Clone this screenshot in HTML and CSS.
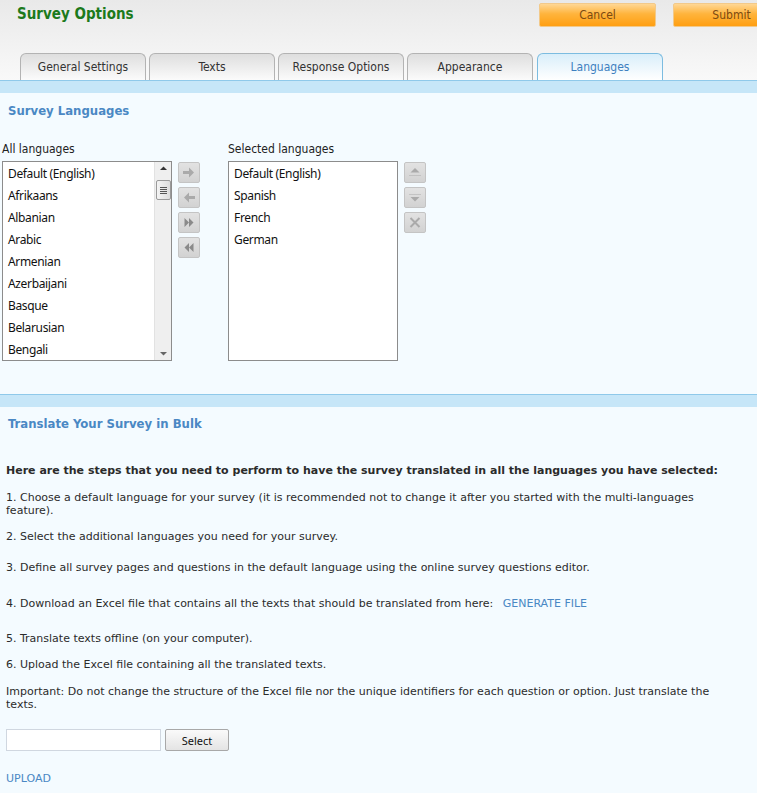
FILE: index.html
```html
<!DOCTYPE html>
<html>
<head>
<meta charset="utf-8">
<link rel="stylesheet" href="styles.css">
</head>
<body>
<div class="page">
  <div class="header">
    <div class="topbar">
      <h1 class="title">Survey Options</h1>
      <div class="actions">
        <button class="obtn">Cancel</button>
        <button class="obtn">Submit</button>
      </div>
    </div>
    <div class="tabs">
      <div class="tab">General Settings</div>
      <div class="tab">Texts</div>
      <div class="tab">Response Options</div>
      <div class="tab">Appearance</div>
      <div class="tab active">Languages</div>
    </div>
  </div>
  <div class="bar"></div>
  <div class="section s1">
    <h2 class="heading">Survey Languages</h2>
    <div class="lists">
      <div class="col">
        <div class="label">All languages</div>
        <div class="listbox">
          <ul class="items">
            <li>Default (English)</li>
            <li>Afrikaans</li>
            <li>Albanian</li>
            <li>Arabic</li>
            <li>Armenian</li>
            <li>Azerbaijani</li>
            <li>Basque</li>
            <li>Belarusian</li>
            <li>Bengali</li>
          </ul>
          <div class="scroll">
            <svg class="sarrow" width="17" height="12" viewBox="0 0 17 12"><path d="M5 8 L8.5 4.5 L12 8 Z" fill="#333"/></svg>
            <div class="thumb">
              <svg width="9" height="8" viewBox="0 0 9 8"><path d="M1 1.5H8M1 3.5H8M1 5.5H8M1 7.5H8" stroke="#555" stroke-width="1"/></svg>
            </div>
            <div class="sfill"></div>
            <svg class="sarrow" width="17" height="12" viewBox="0 0 17 12"><path d="M5 4 L12 4 L8.5 7.5 Z" fill="#666"/></svg>
          </div>
        </div>
      </div>
      <div class="btncol">
        <div class="ibtn"><svg width="20" height="19" viewBox="0 0 20 19"><path d="M4 8H10V4.5L15 9.5L10 14.5V11H4Z" fill="#aaa"/></svg></div>
        <div class="ibtn"><svg width="20" height="19" viewBox="0 0 20 19"><path d="M16 8H10V4.5L5 9.5L10 14.5V11H16Z" fill="#aaa"/></svg></div>
        <div class="ibtn"><svg width="20" height="19" viewBox="0 0 20 19"><path d="M5.5 5L10 9.5L5.5 14Z M10 5L14.5 9.5L10 14Z" fill="#8a8a8a"/></svg></div>
        <div class="ibtn"><svg width="20" height="19" viewBox="0 0 20 19"><path d="M14.5 5L10 9.5L14.5 14Z M10 5L5.5 9.5L10 14Z" fill="#8a8a8a"/></svg></div>
      </div>
      <div class="col col2">
        <div class="label">Selected languages</div>
        <div class="listbox">
          <ul class="items">
            <li>Default (English)</li>
            <li>Spanish</li>
            <li>French</li>
            <li>German</li>
          </ul>
        </div>
      </div>
      <div class="btncol">
        <div class="ibtn"><svg width="20" height="19" viewBox="0 0 20 19"><path d="M5.5 9.5L10 5L14.5 9.5Z" fill="#aaa"/><path d="M4.5 12.5H15.5" stroke="#aaa" stroke-width="1" stroke-dasharray="1 1"/></svg></div>
        <div class="ibtn"><svg width="20" height="19" viewBox="0 0 20 19"><path d="M5.5 9L10 13.5L14.5 9Z" fill="#aaa"/><path d="M4.5 6.5H15.5" stroke="#aaa" stroke-width="1" stroke-dasharray="1 1"/></svg></div>
        <div class="ibtn"><svg width="20" height="19" viewBox="0 0 20 19"><path d="M5.5 5L14.5 14M14.5 5L5.5 14" stroke="#aaa" stroke-width="2"/></svg></div>
      </div>
    </div>
  </div>
  <div class="bar"></div>
  <div class="section s2">
    <h2 class="heading">Translate Your Survey in Bulk</h2>
    <p class="lead">Here are the steps that you need to perform to have the survey translated in all the languages you have selected:</p>
    <p class="p1">1. Choose a default language for your survey (it is recommended not to change it after you started with the multi-languages feature).</p>
    <p class="p2">2. Select the additional languages you need for your survey.</p>
    <p class="p3">3. Define all survey pages and questions in the default language using the online survey questions editor.</p>
    <p class="p4">4. Download an Excel file that contains all the texts that should be translated from here: <a class="link gen">GENERATE FILE</a></p>
    <p class="p5">5. Translate texts offline (on your computer).</p>
    <p class="p6">6. Upload the Excel file containing all the translated texts.</p>
    <p class="p7">Important: Do not change the structure of the Excel file nor the unique identifiers for each question or option. Just translate the texts.</p>
    <div class="upload">
      <div class="field"></div>
      <button class="sbtn">Select</button>
    </div>
    <a class="link up">UPLOAD</a>
  </div>
</div>
</body>
</html>
```

FILE: styles.css
```css
html, body {
  margin: 0;
  padding: 0;
}
body {
  background: #f4fbff;
  font-family: "DejaVu Sans", sans-serif;
  font-size: 11px;
  color: #2b2b2b;
}
.page {
  width: 757px;
  height: 793px;
  overflow: hidden;
  background: #f4fbff;
}
.header {
  background: linear-gradient(#e9e9e9, #f9f9f9);
  height: 80px;
}
.topbar {
  display: flex;
  align-items: flex-start;
  height: 53px;
}
.title {
  margin: 6px 0 0 17px;
  font-family: "DejaVu Sans Condensed", "DejaVu Sans", sans-serif;
  font-size: 15px;
  line-height: 17px;
  font-weight: bold;
  color: #1c7a1c;
}
.actions {
  margin-left: auto;
  margin-right: -33px;
  margin-top: 3px;
  display: flex;
  gap: 17px;
}
.obtn {
  width: 117px;
  height: 24px;
  border: 1px solid #f2c98a;
  border-radius: 2px;
  background: linear-gradient(#ffd795 0%, #ffb43c 45%, #ff9f12 100%);
  color: #7b4a12;
  font-family: "DejaVu Sans Condensed", "DejaVu Sans", sans-serif;
  font-size: 12px;
  padding: 0;
}
.tabs {
  display: flex;
  padding-left: 20px;
  height: 27px;
}
.tab {
  box-sizing: border-box;
  width: 126px;
  margin-right: 3px;
  height: 27px;
  border: 1px solid #b3b3b3;
  border-bottom: none;
  border-radius: 6px 6px 0 0;
  background: linear-gradient(#dedede, #fbfbfb);
  text-align: center;
  line-height: 26px;
  font-family: "DejaVu Sans Condensed", "DejaVu Sans", sans-serif;
  font-size: 12px;
  color: #333;
}
.tab.active {
  margin-left: 1px;
  border-color: #7cbce0;
  background: linear-gradient(#d9eefa, #ffffff);
  color: #3d80c0;
}
.bar {
  height: 12px;
  background: #c6e6f8;
  border-top: 1px solid #8fc9ea;
}
.heading {
  margin: 0;
  font-family: "DejaVu Sans Condensed", "DejaVu Sans", sans-serif;
  font-size: 13px;
  line-height: 16px;
  font-weight: bold;
  color: #4a88c4;
  padding-left: 8px;
}
.s1 .heading {
  padding-top: 10px;
}
.lists {
  display: flex;
  align-items: flex-start;
  margin-top: 22px;
  padding-left: 2px;
  padding-bottom: 33px;
}
.label {
  font-family: "DejaVu Sans Condensed", "DejaVu Sans", sans-serif;
  font-size: 12px;
  line-height: 14px;
  height: 14px;
  margin-bottom: 6px;
  color: #222;
  position: relative;
  top: 1px;
}
.listbox {
  box-sizing: border-box;
  width: 170px;
  height: 200px;
  border: 1px solid #8c8c8c;
  background: #fff;
  display: flex;
}
.items {
  list-style: none;
  margin: 0;
  padding: 1px 0 0 5px;
  flex: 1;
  font-family: "Noto Sans", sans-serif;
  font-size: 12px;
  letter-spacing: -0.35px;
  color: #111;
}
.items li {
  height: 22px;
  line-height: 22px;
}
.scroll {
  width: 16px;
  background: #efefef;
  border-left: 1px solid #e2e2e2;
  display: flex;
  flex-direction: column;
  align-items: center;
}
.sarrow {
  display: block;
  flex: none;
}
.sfill {
  flex: 1;
}
.thumb {
  box-sizing: border-box;
  margin-top: 6px;
  width: 15px;
  height: 20px;
  border: 1px solid #9a9a9a;
  border-radius: 2px;
  background: linear-gradient(90deg, #f4f4f4, #dcdcdc);
  display: flex;
  align-items: center;
  justify-content: center;
}
.thumb svg { display: block; }
.btncol {
  display: flex;
  flex-direction: column;
  gap: 4px;
  margin-top: 21px;
  margin-left: 6px;
}
.ibtn {
  box-sizing: border-box;
  width: 22px;
  height: 21px;
  border: 1px solid #c4c4c4;
  border-radius: 2px;
  background: linear-gradient(#e2e2e2, #d2d2d2);
  display: flex;
  align-items: center;
  justify-content: center;
}
.ibtn svg { display: block; }
.col2 {
  margin-left: 28px;
}
.s2 {
  padding: 9px 30px 0 6px;
}
.s2 .heading {
  padding-left: 2px;
}
.s2 p {
  margin: 0;
  line-height: 13px;
}
.lead { font-weight: bold; margin-top: 32px !important; }
.p1 { margin-top: 14px !important; }
.p2 { margin-top: 13px !important; }
.p3 { margin-top: 18px !important; }
.p4 { margin-top: 23px !important; }
.p5 { margin-top: 22px !important; }
.p6 { margin-top: 13px !important; }
.p7 { margin-top: 14px !important; }
.link {
  color: #4a88c4;
  text-decoration: none;
}
.gen { margin-left: 6px; }
.upload {
  display: flex;
  margin-top: 18px;
  gap: 4px;
}
.field {
  box-sizing: border-box;
  width: 155px;
  height: 22px;
  border: 1px solid #d0d7e0;
  background: #fff;
}
.sbtn {
  box-sizing: border-box;
  width: 64px;
  height: 22px;
  border: 1px solid #a8a8a8;
  border-radius: 2px;
  background: linear-gradient(#fafafa, #e4e4e4);
  font-family: "Noto Sans", sans-serif;
  font-size: 11px;
  color: #111;
  padding: 0;
}
.up {
  display: block;
  margin-top: 21px;
  line-height: 13px;
}
```
